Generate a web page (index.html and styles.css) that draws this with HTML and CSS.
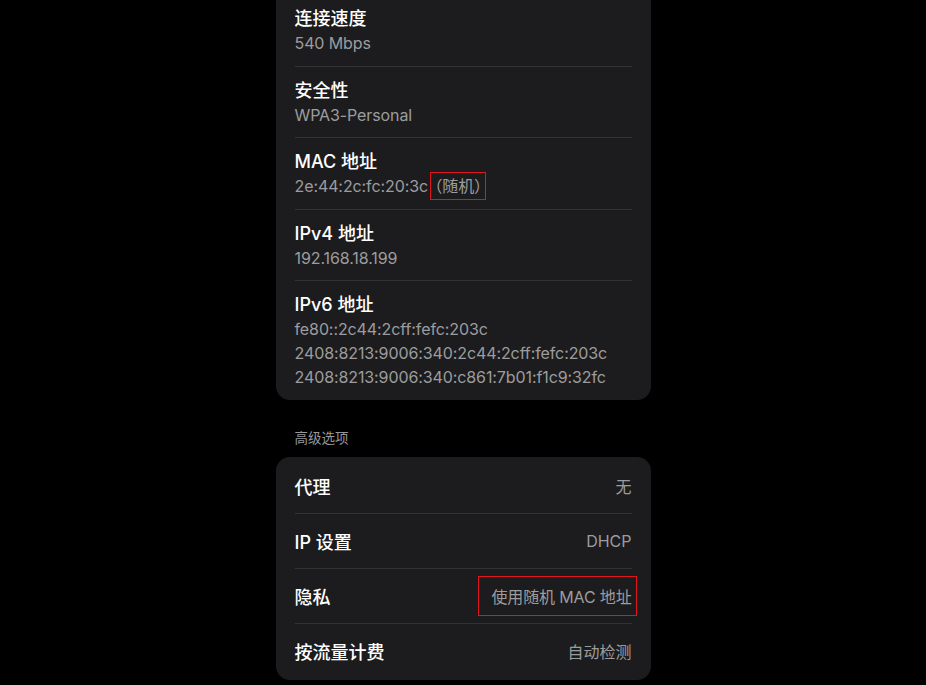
FILE: index.html
```html
<!DOCTYPE html>
<html lang="zh-CN">
<head>
  <meta charset="UTF-8">
  <meta name="viewport" content="width=device-width, initial-scale=1.0">
  <title>Wi-Fi 详情</title>
  <link rel="stylesheet" href="styles.css">
</head>
<body>
  <div class="page">
    <div class="card card-scrolled">
      <div class="info-row">
        <p class="info-title">连接速度</p>
        <p class="info-value">540 Mbps</p>
      </div>
      <div class="info-row">
        <p class="info-title">安全性</p>
        <p class="info-value">WPA3-Personal</p>
      </div>
      <div class="info-row">
        <p class="info-title">MAC 地址</p>
        <p class="info-value">2e:44:2c:fc:20:3c <span class="marcado">（随机）</span></p>
      </div>
      <div class="info-row">
        <p class="info-title">IPv4 地址</p>
        <p class="info-value">192.168.18.199</p>
      </div>
      <div class="info-row">
        <p class="info-title">IPv6 地址</p>
        <p class="info-value">fe80::2c44:2cff:fefc:203c</p>
        <p class="info-value">2408:8213:9006:340:2c44:2cff:fefc:203c</p>
        <p class="info-value">2408:8213:9006:340:c861:7b01:f1c9:32fc</p>
      </div>
    </div>

    <p class="section-label">高级选项</p>

    <div class="card card-options">
      <div class="option-row">
        <span class="option-name">代理</span>
        <span class="option-value">无</span>
      </div>
      <div class="option-row">
        <span class="option-name">IP 设置</span>
        <span class="option-value">DHCP</span>
      </div>
      <div class="option-row">
        <span class="option-name">隐私</span>
        <span class="option-value marcado-grande">使用随机 MAC 地址</span>
      </div>
      <div class="option-row">
        <span class="option-name">按流量计费</span>
        <span class="option-value">自动检测</span>
      </div>
    </div>
  </div>
</body>
</html>
```

FILE: styles.css
```css
body {
  margin: 0;
  padding: 0;
  background-color: black;
  color: white;
  font-family: Inter, "Noto Sans CJK SC", sans-serif;
}

p {
  margin: 0;
}

.page {
  width: 375px;
  margin: 0 auto;
}

.card {
  background-color: #1c1c1e;
  border-radius: 14px;
  padding: 0 19px;
}

/* la tarjeta de arriba sigue por encima de la ventana */
.card-scrolled {
  border-top-left-radius: 0;
  border-top-right-radius: 0;
}

.card-options {
  padding-top: 2px;
  padding-bottom: 2px;
}

.info-row {
  padding: 12px 0 10.5px;
  border-bottom: 1px solid #333335;
}

.card-scrolled .info-row:first-child {
  padding-top: 7px;
}

.info-row:last-child {
  border-bottom: none;
  padding-bottom: 11px;
}

.info-title {
  font-size: 18px;
  line-height: 24px;
  font-weight: 500;
}

.info-value {
  font-size: 16px;
  line-height: 24px;
  color: #9c9c9e;
  letter-spacing: -0.1px;
}

/* recuadro rojo de anotación */
.marcado {
  border: 1px solid #e0151b;
  padding: 3px 3px;
  margin-left: -2px;
  font-feature-settings: "halt";
}

.section-label {
  margin: 29px 0 10px 19px;
  font-size: 13.5px;
  line-height: 18px;
  color: #98989d;
}

.option-row {
  display: flex;
  justify-content: space-between;
  align-items: center;
  height: 54px;
  border-bottom: 1px solid #333335;
}

.option-row:last-child {
  border-bottom: none;
}

.option-name {
  font-size: 18px;
  font-weight: 500;
}

.option-value {
  font-size: 16px;
  color: #9c9c9e;
}

.marcado-grande {
  border: 1px solid #e0151b;
  padding: 7px 4px 7px 13px;
  margin-right: -5px;
  letter-spacing: -0.15px;
}
```
